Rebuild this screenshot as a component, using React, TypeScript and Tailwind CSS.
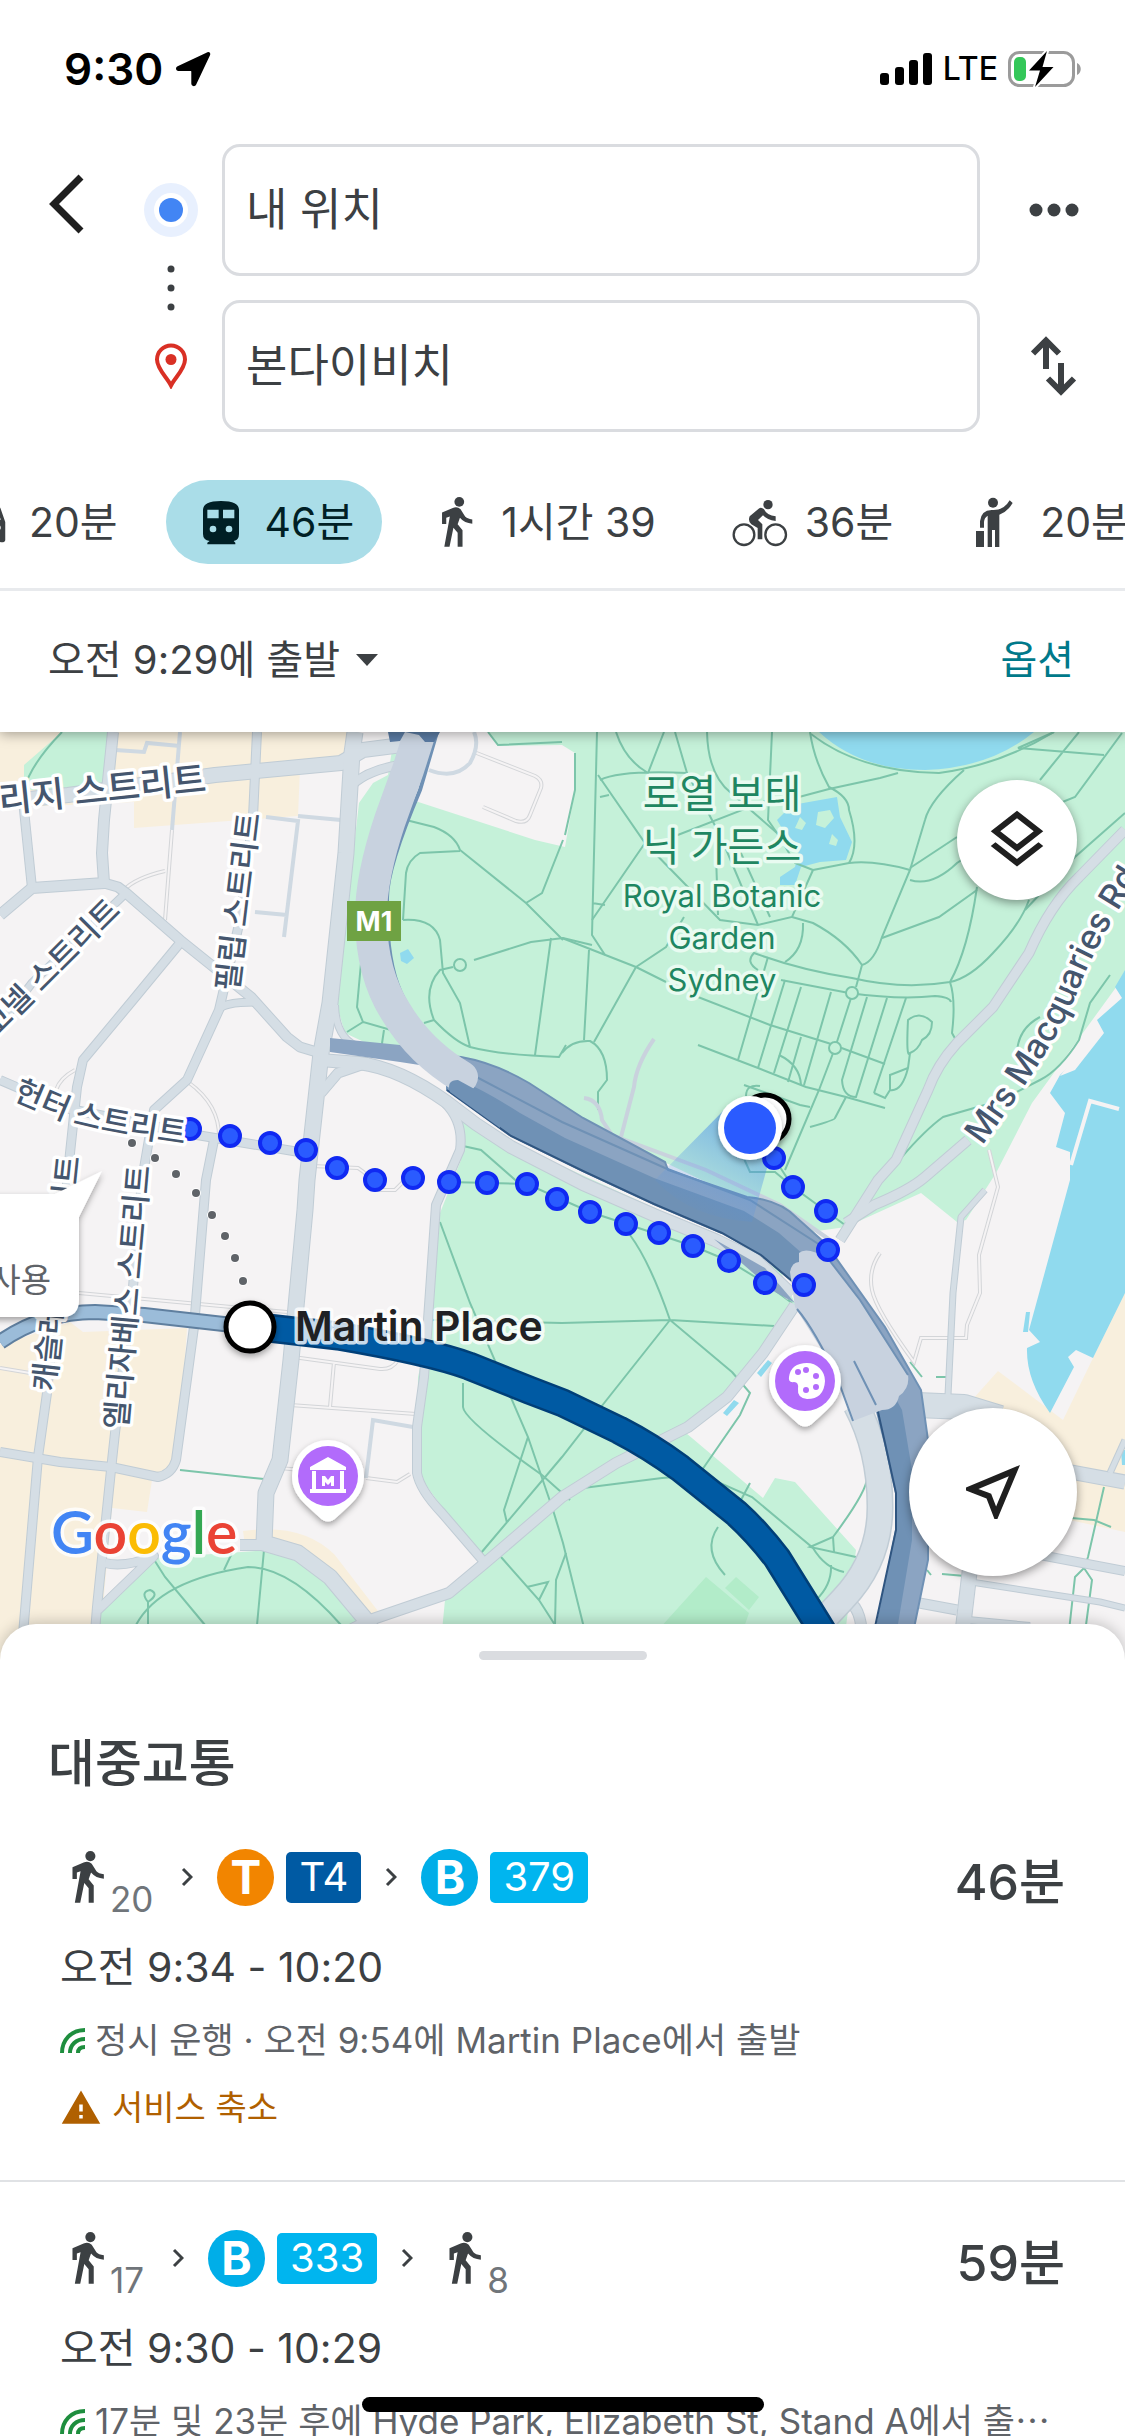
import { Fragment } from "react";
import type { ReactNode } from "react";
import { MdDirectionsCar, MdOutlineLayers, MdOutlineNearMe, MdWarning } from "react-icons/md";

type Leg =
  | { kind: "walk"; minutes: number }
  | { kind: "line"; letter: string; letterColor: string; name: string; nameColor: string };

type Trip = {
  id: string;
  duration: string;
  time: string;
  status: string;
  warning?: string;
  legs: Leg[];
};

const TRIPS: Trip[] = [
  {
    id: "t4-379",
    duration: "46분",
    time: "오전 9:34 - 10:20",
    status: "정시 운행 · 오전 9:54에 Martin Place에서 출발",
    warning: "서비스 축소",
    legs: [
      { kind: "walk", minutes: 20 },
      { kind: "line", letter: "T", letterColor: "bg-[#f28500]", name: "T4", nameColor: "bg-[#005aa3]" },
      { kind: "line", letter: "B", letterColor: "bg-[#00aee8]", name: "379", nameColor: "bg-[#00b5ef]" },
    ],
  },
  {
    id: "333",
    duration: "59분",
    time: "오전 9:30 - 10:29",
    status: "17분 및 23분 후에 Hyde Park, Elizabeth St, Stand A에서 출⋯",
    legs: [
      { kind: "walk", minutes: 17 },
      { kind: "line", letter: "B", letterColor: "bg-[#00aee8]", name: "333", nameColor: "bg-[#00b5ef]" },
      { kind: "walk", minutes: 8 },
    ],
  },
];

function CarIcon() {
  return <MdDirectionsCar size={54} />;
}

function TransitIcon() {
  return (
    <svg width="54" height="54" viewBox="-24 -15 162 162" fill="currentColor" fillRule="evenodd">
      <path d="M3 30Q3 3 57 3t54 27v72q0 18-16 21l5 5v5H16v-5l7-5Q3 120 3 102zM16 29v26h34V29zM63 29v26h34V29zM23 87a10 10 0 1 0 20 0 10 10 0 1 0-20 0zM71 87a10 10 0 1 0 20 0 10 10 0 1 0-20 0z" />
    </svg>
  );
}

function WalkIcon({ size = 54 }: { size?: number }) {
  return (
    <svg width={size} height={size} viewBox="-34 -4 166 166" fill="currentColor">
      <circle cx="56" cy="17" r="15" />
      <path d="M3 50 36 36Q50 30 60 40L74 62Q80 69 96 71V84Q72 83 58 66L51 86 66 104V155H51V112L38 97 26 155H10L27 62 16 66V85H3z" />
    </svg>
  );
}

function BikeIcon() {
  return (
    <svg width="56" height="54" viewBox="0 -12 168 162" fill="currentColor">
      <circle cx="36" cy="107" r="31" fill="none" stroke="currentColor" strokeWidth="7" />
      <circle cx="131" cy="107" r="31" fill="none" stroke="currentColor" strokeWidth="7" />
      <circle cx="108" cy="17" r="14" />
      <path d="M53 52 80 29Q88 23 96 31 105 50 131 52V66Q105 63 93 49L78 63 91 76V121H77V87L58 76Q47 67 53 52z" />
    </svg>
  );
}

function HailIcon() {
  return (
    <svg width="54" height="54" viewBox="-18 -6 162 162" fill="currentColor">
      <circle cx="54" cy="17" r="15" />
      <path d="M104 10 113 18Q97 45 73 53V150H60V99H51V150H38V56Q28 62 27 75V92H15V73Q18 40 50 39 86 42 104 10z" />
      <path d="M3 102h24v48H3z" />
    </svg>
  );
}

const MODES = [
  { id: "car", label: "20분", Icon: CarIcon },
  { id: "transit", label: "46분", Icon: TransitIcon },
  { id: "walk", label: "1시간 39", Icon: WalkIcon },
  { id: "bike", label: "36분", Icon: BikeIcon },
  { id: "hail", label: "20분", Icon: HailIcon },
];

function StatusBar() {
  return (
    <div className="flex h-36 items-center justify-between pb-1.5 pl-16 pr-[42px] text-black">
      <div className="flex items-center gap-3">
        <span className="text-[44px] font-semibold leading-none">9:30</span>
        <svg width="36" height="36" viewBox="0 0 36 36" fill="currentColor">
          <path d="M32.500 1.200 2.600 15.300c-2.600 1.200-1.800 4.700.9 4.700h12.300c.3 0 .5.200.5.500v12.100c0 2.800 3.700 3.500 4.900 1L35 4.200c.9-2-.6-3.800-2.500-3z" />
        </svg>
      </div>
      <div className="flex items-center gap-2.5">
        <svg width="53" height="34" viewBox="0 0 53 34" fill="currentColor">
          <rect x="0" y="21" width="9" height="12" rx="3" />
          <rect x="15" y="15" width="9" height="18" rx="3" />
          <rect x="29" y="8" width="9" height="25" rx="3" />
          <rect x="43" y="1" width="9" height="32" rx="3" />
        </svg>
        <span className="text-[32px] font-medium leading-none">LTE</span>
        <svg width="75" height="38" viewBox="0 0 75 38">
          <rect x="1.500" y="2.500" width="64" height="33" rx="10" fill="none" stroke="#9b9b9b" strokeWidth="3" />
          <path d="M69 13v12c5-2 5-10 0-12z" fill="#9b9b9b" />
          <rect x="6" y="7" width="12" height="24" rx="5" fill="#34c759" />
          <path
            d="M39 1 21 20.500h11L27 37l18.500-20H34.500z"
            fill="#000"
            stroke="#fff"
            strokeWidth="4"
            paintOrder="stroke"
            strokeLinejoin="round"
          />
        </svg>
      </div>
    </div>
  );
}

function RouteForm() {
  return (
    <form className="flex items-start px-[42px]" onSubmit={(e) => e.preventDefault()}>
      <button type="button" aria-label="뒤로" className="flex h-[120px] w-12 shrink-0 items-center justify-center">
        <svg width="36" height="60" viewBox="0 0 36 60" fill="none" stroke="#1f1f1f" strokeWidth="7">
          <path d="M33 3 6 30l27 27" />
        </svg>
      </button>
      <div className="ml-[51px] flex w-[60px] shrink-0 flex-col">
        <div className="flex h-[132px] items-center justify-center">
          <svg width="54" height="54" viewBox="0 0 54 54">
            <circle cx="27" cy="27" r="27" fill="#e8f0fe" />
            <circle cx="27" cy="27" r="17" fill="#fff" />
            <circle cx="27" cy="27" r="12" fill="#4285f4" />
          </svg>
        </div>
        <div className="flex h-6 items-center justify-center">
          <svg className="shrink-0" width="8" height="46" viewBox="0 0 8 46" fill="#3c4043">
            <circle cx="4" cy="4" r="3.500" />
            <circle cx="4" cy="23" r="3.500" />
            <circle cx="4" cy="42" r="3.500" />
          </svg>
        </div>
        <div className="flex h-[132px] items-center justify-center">
          <svg width="34" height="46" viewBox="0 0 34 46">
            <path
              d="M17 42.500C13 34.500 3 26 3 16.500a14 14 0 0 1 28 0c0 9.500-10 18-14 26z"
              fill="none"
              stroke="#d93025"
              strokeWidth="4"
            />
            <circle cx="17" cy="16.500" r="5.500" fill="#d93025" />
          </svg>
        </div>
      </div>
      <div className="ml-[21px] flex min-w-0 flex-1 flex-col gap-6">
        <input
          aria-label="출발지"
          defaultValue="내 위치"
          className="h-[132px] w-full rounded-[18px] border-[3px] border-[#dadce0] pb-2 pl-[21px] text-[45px] text-[#3c4043] outline-none"
        />
        <input
          aria-label="도착지"
          defaultValue="본다이비치"
          className="h-[132px] w-full rounded-[18px] border-[3px] border-[#dadce0] pb-2 pl-[21px] text-[45px] text-[#3c4043] outline-none"
        />
      </div>
      <div className="ml-[45px] flex w-[58px] shrink-0 flex-col gap-6 text-[#3c4043]">
        <button type="button" aria-label="더보기" className="flex h-[132px] items-center justify-center">
          <svg width="50" height="14" viewBox="0 0 50 14" fill="currentColor">
            <circle cx="7" cy="7" r="6.500" />
            <circle cx="25" cy="7" r="6.500" />
            <circle cx="43" cy="7" r="6.500" />
          </svg>
        </button>
        <button type="button" aria-label="출발지와 도착지 바꾸기" className="flex h-[132px] items-center justify-center">
          <svg width="46" height="60" viewBox="0 0 46 60" fill="none" stroke="currentColor" strokeWidth="6">
            <path d="M15 33V5M2 17.500 15 4.500l13 13M30 27v28M17 42.500l13 13 13-13" />
          </svg>
        </button>
      </div>
    </form>
  );
}

function ModeTabs() {
  return (
    <nav className="overflow-hidden border-b-[3px] border-[#e8eaed] pb-6 pt-12">
      <div className="-ml-[70px] flex gap-5">
        {MODES.map(({ id, label, Icon }) => (
          <button
            key={id}
            type="button"
            aria-pressed={id === "transit"}
            className={
              id === "transit"
                ? "flex h-[84px] shrink-0 items-center gap-[17px] rounded-full bg-[#aadde8] px-7 text-[#001f25]"
                : "flex h-[84px] shrink-0 items-center gap-[17px] rounded-full px-7 text-[#3c4043]"
            }
          >
            <Icon />
            <span className="whitespace-nowrap text-[41px] leading-[48px]">{label}</span>
          </button>
        ))}
      </div>
    </nav>
  );
}

const WALK_DOTS = [
  [190, 1129], [230, 1136], [270, 1143], [306, 1150], [337, 1168], [375, 1180], [413, 1178], [449, 1182],
  [487, 1183], [527, 1184], [557, 1199], [590, 1212], [626, 1224], [659, 1233], [693, 1246], [729, 1261],
  [765, 1283], [804, 1285], [828, 1250], [826, 1211], [793, 1187], [774, 1158],
];

const TRANSFER_DOTS = [
  [132, 1143], [155, 1158], [176, 1174], [196, 1193], [212, 1215], [225, 1236], [235, 1258], [243, 1281],
];

// street centre lines as [path, width]
const ROADS: [string, number][] = [
  ["M0 802 68 795 215 775 341 763 363 750 402 745", 14],
  ["M355 732 352 753 346 853 330 1003 321 1053 307 1180 305 1210 291 1360 280 1460 266 1493 264 1543 298 1553 330 1577 366 1620 395 1670", 15],
  ["M352 785Q368 770 400 765", 8],
  ["M257 732 253 817 240 920 219 1010 187 1080 154 1110 142 1180 133 1287 115 1433 111 1470 97 1607 92 1670", 8],
  ["M113 732 104 820 102 853 104 883 32 888 0 915", 10],
  ["M23 800 32 888", 8],
  ["M104 883 118 887 126 893 180 940 251 997 287 1037 300 1047 320 1053", 9],
  ["M180 943 133 1000 83 1060 77 1087 70 1153 47 1393 38 1457 20 1670", 8],
  ["M126 893 32 983 0 1025", 7],
  ["M219 1010Q222 1002 255 1002", 7],
  ["M0 1080 65 1108 197 1135 305 1153", 8],
  ["M214 1140 206 1180 194 1327 176 1460Q172 1474 158 1477L111 1467 60 1462 0 1452", 8],
  ["M321 1093 338 1073 370 1062", 9],
  ["M320 1060 359 1063Q399 1068 447 1102L476 1124 511 1147 583 1184 654 1215 715 1240 754 1259 792 1295", 12],
  ["M445 1103Q464 1122 460 1150L436 1205 424 1377 417 1427 417 1473Q420 1490 442 1513L485 1563", 8],
  ["M795 1305 763 1353 727 1397 688 1427 616 1463 562 1497 485 1563 449 1593 370 1620 330 1640", 10],
  ["M335 1005Q336 1040 360 1047L380 1052", 6],
  ["M105 1563Q125 1568 154 1556L98 1610", 8],
  ["M240 1545 264 1545", 10],
  ["M845 1600Q862 1605 862 1640", 10],
  ["M1125 830 1079 877Q1050 905 1029 953L993 1007 957 1043Q937 1065 928 1090L896 1160 878 1180 840 1240", 9],
  ["M968 1140 925 1177Q910 1190 874 1205L846 1223", 9],
  ["M985 1190 961 1217 953 1293 948 1395", 5],
  ["M917 1405 964 1407 1000 1418", 24],
  ["M1060 1470 1125 1482", 13],
  ["M1110 1473 1125 1440", 5],
  ["M1040 1555 1125 1571", 8],
  ["M971 1560 958 1670", 14],
  ["M971 1582 1100 1602 1125 1608", 5],
  ["M914 1602 957 1610", 9],
  ["M968 1620 1030 1626", 6],
];

const LANES = [
  "M180 732 172 830",
  "M115 750 144 752 147 743 180 746",
  "M266 817 298 821 284 937M255 912 287 915M298 816 341 820",
  "M366 1478 373 1420 413 1427",
];

const ALLEYS = [
  "M172 830 165 920M165 871Q135 878 124 890",
  "M75 1070Q60 1078 56 1090M188 1082Q220 1105 219 1138",
  "M79 1293 287 1312",
  "M293 1357 380 1369Q392 1370 398 1360M334 1362 330 1407M290 1405 416 1414M280 1468 300 1470M366 1478 397 1482 410 1474",
  "M312 1166 358 1168Q370 1175 375 1190L395 1190 405 1180",
  "M474 752 535 776Q543 780 541 788L530 815Q527 824 516 821L483 807",
  "M880 1253Q868 1270 872 1290 876 1310 914 1362L921 1338 966 1338 967 1325 980 1293 979 1255 998 1187 989 1150",
  "M0 1368 30 1373",
];

const FOOTPATHS = [
  "M597 732 592 935 605 955M592 903 605 905",
  "M562 938 636 967 666 982M698 997 770 1025 828 1043 885 1064",
  "M698 1045 758 1068 806 1087 846 1097 885 1108",
  "M616 732Q625 760 648 773L664 732M600 780Q620 770 687 773L675 732",
  "M598 775 645 843 720 920 758 925 792 917 813 870",
  "M687 773 720 835 758 925M707 732Q708 775 731 793L777 833 795 863 813 870",
  "M772 732 768 820 777 833M600 797 609 795M670 838 768 800",
  "M735 840 770 917M716 855 718 915",
  "M810 732Q814 760 829 787 849 797 849 810 860 845 849 863",
  "M811 734Q860 772 939 773 1000 765 1054 732",
  "M799 797 829 789 880 778 898 773",
  "M964 770Q930 800 925 820L910 870 882 937Q874 962 862 965L856 987",
  "M813 870 849 863Q874 860 910 870",
  "M910 880Q932 887 957 863L1000 835M910 868 957 837",
  "M882 938 939 917 977 890",
  "M977 887Q968 950 950 982 956 1000 952 1033L957 1042",
  "M1029 900Q1020 925 993 953 970 978 950 982 903 990 852 978 800 970 754 953 745 962 758 970",
  "M781 980 849 993Q900 1000 935 996 950 997 951 1002",
  "M792 917 813 923Q845 940 862 965M803 923Q804 950 785 962",
  "M768 957 738 1060M785 980 758 1068M801 987 774 1073M831 992 804 1085M851 998 835 1048 819 1090 785 1170",
  "M867 997 842 1080Q843 1097 856 1097L887 998M906 998 874 1093M801 1037 788 1082M779 1055Q800 1065 801 1085",
  "M910 1053Q906 1060 908 1020 920 1010 932 1022 932 1035 922 1040 918 1050 910 1053L908 1068 890 1075 890 1090Q902 1092 908 1068M890 1090 885 1098 874 1093",
  "M592 920 645 843M636 967 594 1042M589 950 584 1040M562 1053Q572 1040 590 1041 607 1050 607 1080L598 1092 598 1110",
  "M636 967 666 947 684 917M744 1085 800 1105 810 1107M746 1096Q746 1084 760 1086",
  "M810 1127Q835 1120 835 1118L846 1097",
  "M1040 1017Q1015 1030 1017 1060M1002 1100 943 1117Q925 1130 901 1158M1110 975 1090 1003 1079 1040Q1060 1070 1040 1080L1005 1098",
  "M1054 732 1018 748 1104 755M1122 733 1075 797 1060 803M1079 732 1040 780M1125 813 1075 857 1025 910",
  "M406 820 434 827Q455 835 460 850L526 903 563 940M460 851 420 853Q408 860 406 873L403 920M563 840 542 893 526 903",
  "M403 920Q434 918 440 940L443 973 460 1003 470 1047M474 960 531 942 563 938 592 945M453 967 440 970Q422 990 434 1020 455 1042 470 1047 500 1055 559 1057L566 1045M434 1020 424 1023M551 938 535 1055",
  "M361 963 357 1007 363 1022 391 1030M363 1022 347 1032M384 1030 381 1050",
  "M488 732 498 745 562 742M575 753 575 790 565 835",
  "M24 790Q30 765 62 732",
  "M463 1146 481 1150 521 1185M440 1222 470 1303 528 1437 553 1510 563 1543 587 1640",
  "M449 1182 527 1184 590 1212 693 1246 729 1261 765 1283 792 1303",
  "M463 1383V1407Q464 1420 542 1475L570 1500M601 1407 562 1457 481 1553M528 1437 504 1510 507 1523",
  "M501 1557 539 1600 555 1625M527 1587 548 1582 539 1600M566 1553 556 1580 555 1625",
  "M431 1320 562 1323 670 1320 774 1326M630 1235Q650 1262 670 1320L732 1372M732 1372 750 1393 740 1415 702 1470M670 1320 601 1407",
  "M583 1488 662 1478 702 1475 752 1497 813 1548Q825 1568 844 1572M750 1483 741 1500",
  "M867 1477Q868 1490 833 1537L810 1547 856 1557M833 1537 834 1552M831 1565Q832 1585 816 1600",
  "M718 1527Q702 1550 725 1575",
  "M1104 1487 1088 1557 1084 1568M1060 1517 1094 1520 1111 1527M1068 1640 1075 1577 1084 1568 1092 1580 1084 1640M1066 1595 1100 1602",
  "M136 1625Q160 1580 248 1567 290 1567 341 1625M153 1558 165 1577 205 1625M264 1550 257 1625M180 1470 264 1479M148 1625V1602Q140 1592 150 1590 160 1594 148 1602M232 1553 224 1570",
  "M774 1158 793 1187 845 1225M740 1150 750 1172 775 1172 793 1187",
  "M885 1340 898 1352M910 1362 922 1377M936 1377 946 1377M927 1570 931 1575M942 1574 965 1576",
];

const RAIL =
  "M250 1326 338 1336Q431 1352 469 1366L529 1390 563 1403 619 1430Q650 1446 680 1468L736 1513Q757 1532 777 1558L818 1624 855 1685";

function MapPin({ x, y, children }: { x: number; y: number; children: ReactNode }) {
  return (
    <g transform={`translate(${x} ${y})`}>
      <path
        d="M-36 0a36 36 0 0 1 72 0c0 13-6 21-14 29L9 41q-9 9-18 0l-13-12c-8-8-14-16-14-29z"
        fill="#fff"
        filter="url(#soft)"
      />
      <circle r="30" fill="#b26bfb" />
      {children}
    </g>
  );
}

function MapCanvas() {
  return (
    <svg
      className="block h-full w-full"
      viewBox="0 732 1125 940"
      preserveAspectRatio="xMidYMin slice"
      role="img"
      aria-label="시드니 지도"
    >
      <defs>
        <filter id="soft" x="-30%" y="-30%" width="160%" height="170%">
          <feDropShadow dx="0" dy="3" stdDeviation="3" floodOpacity="0.35" />
        </filter>
        <linearGradient id="beam" gradientUnits="userSpaceOnUse" x1="750" y1="1128" x2="700" y2="1225">
          <stop offset="0" stopColor="#4a90e8" stopOpacity="0.6" />
          <stop offset="1" stopColor="#4a90e8" stopOpacity="0" />
        </linearGradient>
        <path id="hunter" d="M12 1099 62 1120Q90 1131 190 1145" />
        <path id="macq" d="M982 1146Q1060 1040 1079 988 1095 945 1142 872" />
      </defs>

      <rect x="0" y="732" width="1125" height="940" fill="#f5f3f4" />

      {/* built-up blocks */}
      <g fill="#f8efdd">
        <path d="M0 732H357L352 757 300 768 298 816 134 828V802L0 808z" />
        <path d="M0 1345 70 1322 83 1332 187 1328 178 1468 152 1480 147 1512 112 1508 97 1672H0z" />
        <path d="M998 1371 972 1400 1000 1500 1060 1518 1125 1532V1292L1063 1420z" />
      </g>
      <path d="M244 1538Q300 1530 330 1560L376 1620" fill="none" stroke="#f8efdd" strokeWidth="14" />

      {/* parks */}
      <g fill="#c5f1d9">
        <path d="M62 732H113L107 787 24 790V765z" />
        <path d="M373 783 359 803 336 1003 345 1033 385 1052 440 1058 460 1060 560 1112 810 1232 846 1227 921 1193 957 1222 966 1220 996 1173 1032 1103 1125 975V732H395L388 775z" />
        <path d="M461 1120V1160L440 1213 431 1320 418 1377 417 1473 481 1560 445 1600 438 1672H840L856 1550 795 1482 775 1478 763 1498 686 1433 734 1387 797 1308 780 1270 670 1215z" />
        <path d="M95 1672 100 1612 154 1558 270 1550 315 1565 362 1625 372 1672z" />
      </g>
      <path d="M425 732H488L498 746 562 745 575 753V790L565 847 535 840 406 798z" fill="#f5f3f4" />
      <path d="M706 1577 749 1613 736 1650 640 1650zM736 1577 759 1597 749 1610 725 1588z" fill="#b2ecc9" />

      {/* water */}
      <g fill="#90daee">
        <path d="M819 732Q860 770 925 770 990 768 1034 732z" />
        <path d="M777 820 792 805 837 797 840 817 852 842 846 860 820 862 801 867 795 885H780V877L795 867 799 850 783 830z" />
        <path d="M400 953 408 949 414 958 407 964 401 961z" />
        <path d="M1125 970 1115 987 1122 998 1097 1020 1104 1033 1060 1075 1050 1093 1065 1113 1056 1147 1070 1152V1180L1029 1330 1040 1342 1027 1348Q1026 1380 1050 1413L1074 1367 1068 1357 1076 1350 1093 1358 1125 1293z" />
        <path d="M1026 1312 1030 1312 1028 1332 1023 1332zM768 1360 772 1363 761 1377 757 1373zM734 1400 739 1403 727 1416 723 1413zM1121 1450H1125V1465H1122z" />
      </g>
      <path d="M1104 1033 1080 1050 1060 1076 1075 1070z" fill="#f5f3f4" />
      <path d="M800 817 806 823 802 830 795 828zM818 812 830 810 834 818 825 828 816 825zM832 834 838 840 836 846 829 844z" fill="#c5f1d9" />
      <path d="M1119 1109 1090 1101 1071 1165" fill="none" stroke="#f5f3f4" strokeWidth="4" />

      <g fill="none" stroke="#7cc5aa" strokeWidth="2">
        {FOOTPATHS.map((d) => (
          <path key={d} d={d} />
        ))}
      </g>
      <g fill="#c5f1d9" stroke="#7cc5aa" strokeWidth="2">
        <circle cx="852" cy="993" r="6" />
        <circle cx="835" cy="1048" r="6" />
        <circle cx="460" cy="965" r="6" />
      </g>

      {/* streets: casing first, then fill */}
      <g fill="none" stroke="#d3d5d8" strokeWidth="4">
        {ALLEYS.map((d) => (
          <path key={d} d={d} />
        ))}
      </g>
      <g fill="none" stroke="#f5f3f4" strokeWidth="2">
        {ALLEYS.map((d) => (
          <path key={d} d={d} />
        ))}
      </g>
      <g fill="none" stroke="#cfd9e2" strokeWidth="4">
        {LANES.map((d) => (
          <path key={d} d={d} />
        ))}
        <path d="M654 1039Q636 1065 634 1087L621 1137M584 1098Q600 1100 602 1120L612 1135 706 1170 780 1205 830 1240" stroke="#c9d2dd" />
        <path d="M429 770Q455 780 470 763 480 745 474 732" />
      </g>
      <g fill="none" stroke="#c0ccd5" strokeLinejoin="round">
        {ROADS.map(([d, w]) => (
          <path key={d} d={d} strokeWidth={w + 2} />
        ))}
      </g>
      <g fill="none" stroke="#d5dee5" strokeLinejoin="round">
        {ROADS.map(([d, w]) => (
          <path key={d} d={d} strokeWidth={w} />
        ))}
      </g>

      {/* motorway */}
      <path d="M856 1405Q880 1450 880 1507 880 1560 843 1599L800 1645" fill="none" stroke="#c0ccd5" strokeWidth="27" />
      <path d="M856 1405Q880 1450 880 1507 880 1560 843 1599L800 1645" fill="none" stroke="#d5dee5" strokeWidth="24" />
      <path d="M330 1038 400 1045 455 1056 452 1070 400 1062 330 1052z" fill="#8ba4c2" />
      <path d="M714 1239 765 1268 795 1303 775 1292z" fill="#8ba4c2" />
      <path
        d="M447 1056 461 1057Q495 1063 529 1083L583 1118 665 1162 668 1170 747 1197Q780 1200 797 1218L826 1244 885 1327 921 1390 928 1440V1560L905 1672H868L896 1530V1493L885 1443 874 1400 792 1281 761 1255 722 1233 654 1204 583 1171 511 1136 447 1090z"
        fill="#8ba4c2"
        stroke="#6f91b5"
        strokeWidth="2"
      />
      <path
        d="M455 1079Q476 1085 520 1113L565 1138 654 1178 744 1211 779 1233 804 1255 880 1370 902 1410 912 1470V1540L890 1672H868L896 1530V1493L885 1443 874 1400 792 1281 761 1255 722 1233 654 1204 583 1171 511 1136 450 1092Q445 1082 455 1079z"
        fill="#6f91b5"
      />
      <path d="M467 1072 562 1122 665 1168 750 1200 820 1245" fill="none" stroke="#6f91b5" strokeWidth="2" />
      <path d="M447 1090 511 1136 583 1171 654 1204 722 1233 761 1255 792 1281" fill="none" stroke="#2f5580" strokeWidth="2" />
      <path d="M876 1403 885 1443 896 1493V1530L870 1650" fill="none" stroke="#2f5580" strokeWidth="2" />
      <path d="M437 732 420 790Q386 870 387 900 386 960 401 993 425 1045 475 1082" fill="none" stroke="#6f91b5" strokeWidth="4" />
      <path d="M420 732 408 770 390 820Q370 880 371 920 372 975 396 1012 420 1052 462 1077" fill="none" stroke="#c8d2df" strokeWidth="32" strokeLinecap="round" />
      <path d="M450 1092Q446 1080 458 1080L500 1103 500 1128z" fill="#6f91b5" />
      <path d="M388 732H440L434 742 425 742 419 735 405 732 400 741 390 742z" fill="#5c7da5" />
      <path
        d="M799 1253Q806 1246 828 1258L860 1300 908 1375Q910 1388 899 1396 896 1410 882 1410L853 1421 838 1380 820 1347 795 1307 790 1272Q792 1262 799 1262z"
        fill="#c8d2df"
      />
      <path d="M797 1309Q815 1330 838 1380L853 1421M826 1256 860 1300 908 1375M854 1361 876 1405" fill="none" stroke="#6f91b5" strokeWidth="2" />

      <path d="M728 1106 655 1180Q690 1218 752 1222L772 1150z" fill="url(#beam)" />

      {/* T4 line */}
      <g fill="none" strokeLinejoin="round">
        <path d="M0 1342Q43 1312 95 1312L144 1315 250 1327" stroke="#5f7f9f" strokeWidth="16" />
        <path d="M0 1342Q43 1312 95 1312L144 1315 250 1327" stroke="#9bbcd9" strokeWidth="12" />
        <path d={RAIL} stroke="#003f78" strokeWidth="29" />
        <path d={RAIL} stroke="#005aa3" strokeWidth="24" />
      </g>

      <g fill="#2a5bff" stroke="#1029f2" strokeWidth="4">
        {WALK_DOTS.map(([x, y]) => (
          <circle key={`${x}-${y}`} cx={x} cy={y} r="10" />
        ))}
      </g>
      <g fill="#5f6368" stroke="#fff" strokeWidth="2" paintOrder="stroke">
        {TRANSFER_DOTS.map(([x, y]) => (
          <circle key={`${x}-${y}`} cx={x} cy={y} r="4" />
        ))}
      </g>

      {/* street and park names */}
      <g fill="#45566e" stroke="#fff" strokeWidth="7" paintOrder="stroke" strokeLinejoin="round" fontWeight="500">
        <text transform="translate(0 813) rotate(-6)" fontSize="36">리지 스트리트</text>
        <text transform="translate(238 992) rotate(-83)" fontSize="31">필립 스트리트</text>
        <text transform="translate(122 912) rotate(-45)" fontSize="31" textAnchor="end">오코넬 스트리트</text>
        <text fontSize="31">
          <textPath href="#hunter">헌터 스트리트</textPath>
        </text>
        <text transform="translate(55 1392) rotate(-84)" fontSize="31">캐슬레이 스트리트</text>
        <text transform="translate(127 1430) rotate(-85)" fontSize="31">엘리자베스 스트리트</text>
        <text fontSize="34">
          <textPath href="#macq">Mrs Macquaries Rd</textPath>
        </text>
      </g>
      <g fill="#1f8661" stroke="#e9fbf1" strokeWidth="7" paintOrder="stroke" strokeLinejoin="round" textAnchor="middle">
        <text x="722" y="808" fontSize="40">로열 보태</text>
        <text x="722" y="861" fontSize="40">닉 가든스</text>
        <text x="722" y="907" fontSize="31">Royal Botanic</text>
        <text x="722" y="949" fontSize="31">Garden</text>
        <text x="722" y="991" fontSize="31">Sydney</text>
      </g>

      <rect x="347" y="901" width="54" height="40" fill="#6fa243" />
      <text x="374" y="931" fontSize="27" fontWeight="700" fill="#fff" textAnchor="middle">M1</text>

      <circle cx="250" cy="1327" r="24" fill="#fff" stroke="#000" strokeWidth="5" filter="url(#soft)" />
      <text x="295" y="1341" fontSize="41" fontWeight="600" fill="#202124" stroke="#fff" strokeOpacity="0.8" strokeWidth="7" paintOrder="stroke" strokeLinejoin="round">
        Martin Place
      </text>

      <circle cx="765" cy="1119" r="24" fill="#fff" stroke="#000" strokeWidth="5" filter="url(#soft)" />
      <circle cx="750" cy="1128" r="32" fill="#fff" filter="url(#soft)" />
      <circle cx="750" cy="1128" r="26" fill="#2a5bff" />

      <MapPin x={328} y={1476}>
        <path d="M-18-6v-3L0-19l18 10v3zM-16-5h4v19h-4zM12-5h4v19h-4zM-18 13h36v4h-36zM-6 10V0h3l3 4 3-4h3v10H3V6L0 9l-3-3v4z" fill="#fff" />
      </MapPin>
      <MapPin x={805} y={1381}>
        <path d="M-16-4Q-14-18 2-18A18 18 0 0 1 20 0Q19 18 2 18-8 17-7 8-6 1-11 1-17 2-16-4z" fill="#fff" />
        <circle cx="-7" cy="-9" r="3" fill="#b26bfb" />
        <circle cx="1" cy="-11" r="3" fill="#b26bfb" />
        <circle cx="11" cy="-5" r="3" fill="#b26bfb" />
        <circle cx="11" cy="6" r="3" fill="#b26bfb" />
        <circle cx="1" cy="9" r="3" fill="#b26bfb" />
      </MapPin>

      <path
        d="M-20 1194H55L102 1171 79 1217V1300Q79 1317 62 1317H-20z"
        fill="#fff"
        filter="url(#soft)"
      />
      <text x="51" y="1292" fontSize="33" fill="#5f6368" textAnchor="end">사용</text>

      <text x="51" y="1554" fontSize="59" fontFamily="Lato, sans-serif" fontWeight="600" stroke="#fff" strokeOpacity="0.8" strokeWidth="7" paintOrder="stroke" strokeLinejoin="round">
        <tspan fill="#4285f4">G</tspan>
        <tspan fill="#ea4335">o</tspan>
        <tspan fill="#fbbc04">o</tspan>
        <tspan fill="#4285f4">g</tspan>
        <tspan fill="#34a853">l</tspan>
        <tspan fill="#ea4335">e</tspan>
      </text>
    </svg>
  );
}

function Chevron() {
  return (
    <svg width="12" height="20" viewBox="0 0 12 20" fill="none" stroke="#3c4043" strokeWidth="3">
      <path d="m2 2 8 8-8 8" />
    </svg>
  );
}

function LegBadge({ leg }: { leg: Leg }) {
  if (leg.kind === "walk") {
    return (
      <span className="flex items-center pr-1 text-[#3c4043]">
        <WalkIcon size={56} />
        <span className="-ml-1.5 pt-11 text-[35px] leading-8 text-[#70757a]">{leg.minutes}</span>
      </span>
    );
  }
  return (
    <span className="flex items-center gap-3">
      <span
        className={`${leg.letterColor} flex size-[57px] items-center justify-center rounded-full text-[46px] font-bold leading-none text-white`}
      >
        {leg.letter}
      </span>
      <span className={`${leg.nameColor} flex h-[51px] items-center rounded-[5px] px-[13px] text-[40px] leading-none text-white`}>
        {leg.name}
      </span>
    </span>
  );
}

function TripItem({ trip }: { trip: Trip }) {
  return (
    <li className="border-b-2 border-[#e0e2e5] px-[60px] pb-12 pt-[46px] last:border-b-0">
      <div className="flex h-[60px] items-center justify-between">
        <div className="flex items-center gap-6">
          {trip.legs.map((leg, i) => (
            <Fragment key={i}>
              {i > 0 && <Chevron />}
              <LegBadge leg={leg} />
            </Fragment>
          ))}
        </div>
        <span className="pt-2.5 text-[50px] font-medium leading-[60px] text-[#3c4043]">{trip.duration}</span>
      </div>
      <p className="mt-9 text-[41px] leading-[48px] text-[#3c4043]">{trip.time}</p>
      <p className="mt-[25px] flex items-center gap-2.5 text-[35px] leading-[48px] text-[#5f6368]">
        <svg className="shrink-0" width="25" height="25" viewBox="0 0 25 25" fill="none" stroke="#1e8e3e" strokeWidth="4">
          <path d="M2 25C2 12 11 2 25 2M10 25c0-8 6-14 15-14M18 25c0-4 2-6 7-6" />
        </svg>
        <span className="truncate">{trip.status}</span>
      </p>
      {trip.warning && (
        <p className="mt-5 flex items-center gap-2.5 text-[34px] leading-[48px] text-[#b06000]">
          <MdWarning size={42} />
          {trip.warning}
        </p>
      )}
    </li>
  );
}

export default function App() {
  return (
    <main className="relative flex h-screen flex-col overflow-hidden bg-white font-['Inter','Noto_Sans_CJK_KR',sans-serif]">
      <header className="relative z-10 shrink-0 bg-white shadow-[0_2px_12px_rgba(0,0,0,0.35)]">
        <StatusBar />
        <RouteForm />
        <ModeTabs />
        <div className="flex h-[141px] items-center justify-between pb-1 pl-12 pr-[51px] text-[40px] leading-[48px]">
          <button type="button" className="flex items-center gap-4 text-[#3c4043]">
            오전 9:29에 출발
            <svg width="22" height="12" viewBox="0 0 22 12" fill="currentColor">
              <path d="M0 0h22L11 12z" />
            </svg>
          </button>
          <button type="button" className="text-[#00798a]">옵션</button>
        </div>
      </header>

      <section className="relative h-[940px] shrink-0">
        <MapCanvas />
        <button
          type="button"
          aria-label="지도 레이어"
          className="absolute right-12 top-12 flex size-[120px] items-center justify-center rounded-full bg-white text-[#1f1f1f] shadow-[0_3px_10px_rgba(0,0,0,0.4)]"
        >
          <MdOutlineLayers size={70} />
        </button>
        <button
          type="button"
          aria-label="현재 위치"
          className="absolute bottom-24 right-12 flex size-[168px] items-center justify-center rounded-full bg-white text-[#1f1f1f] shadow-[0_3px_10px_rgba(0,0,0,0.4)]"
        >
          <MdOutlineNearMe size={72} />
        </button>
      </section>

      <section className="relative -mt-12 shrink-0 rounded-t-[36px] bg-white pt-[27px] shadow-[0_-2px_14px_rgba(0,0,0,0.2)]">
        <div className="mx-auto h-[9px] w-[168px] rounded-full bg-[#dadce0]" />
        <h1 className="mb-[7px] mt-[74px] px-12 text-[51px] font-medium leading-[60px] text-[#3c4043]">대중교통</h1>
        <ul>
          {TRIPS.map((trip) => (
            <TripItem key={trip.id} trip={trip} />
          ))}
        </ul>
      </section>

      <div className="absolute bottom-6 left-1/2 h-[15px] w-[402px] -translate-x-1/2 rounded-full bg-black" />
    </main>
  );
}
